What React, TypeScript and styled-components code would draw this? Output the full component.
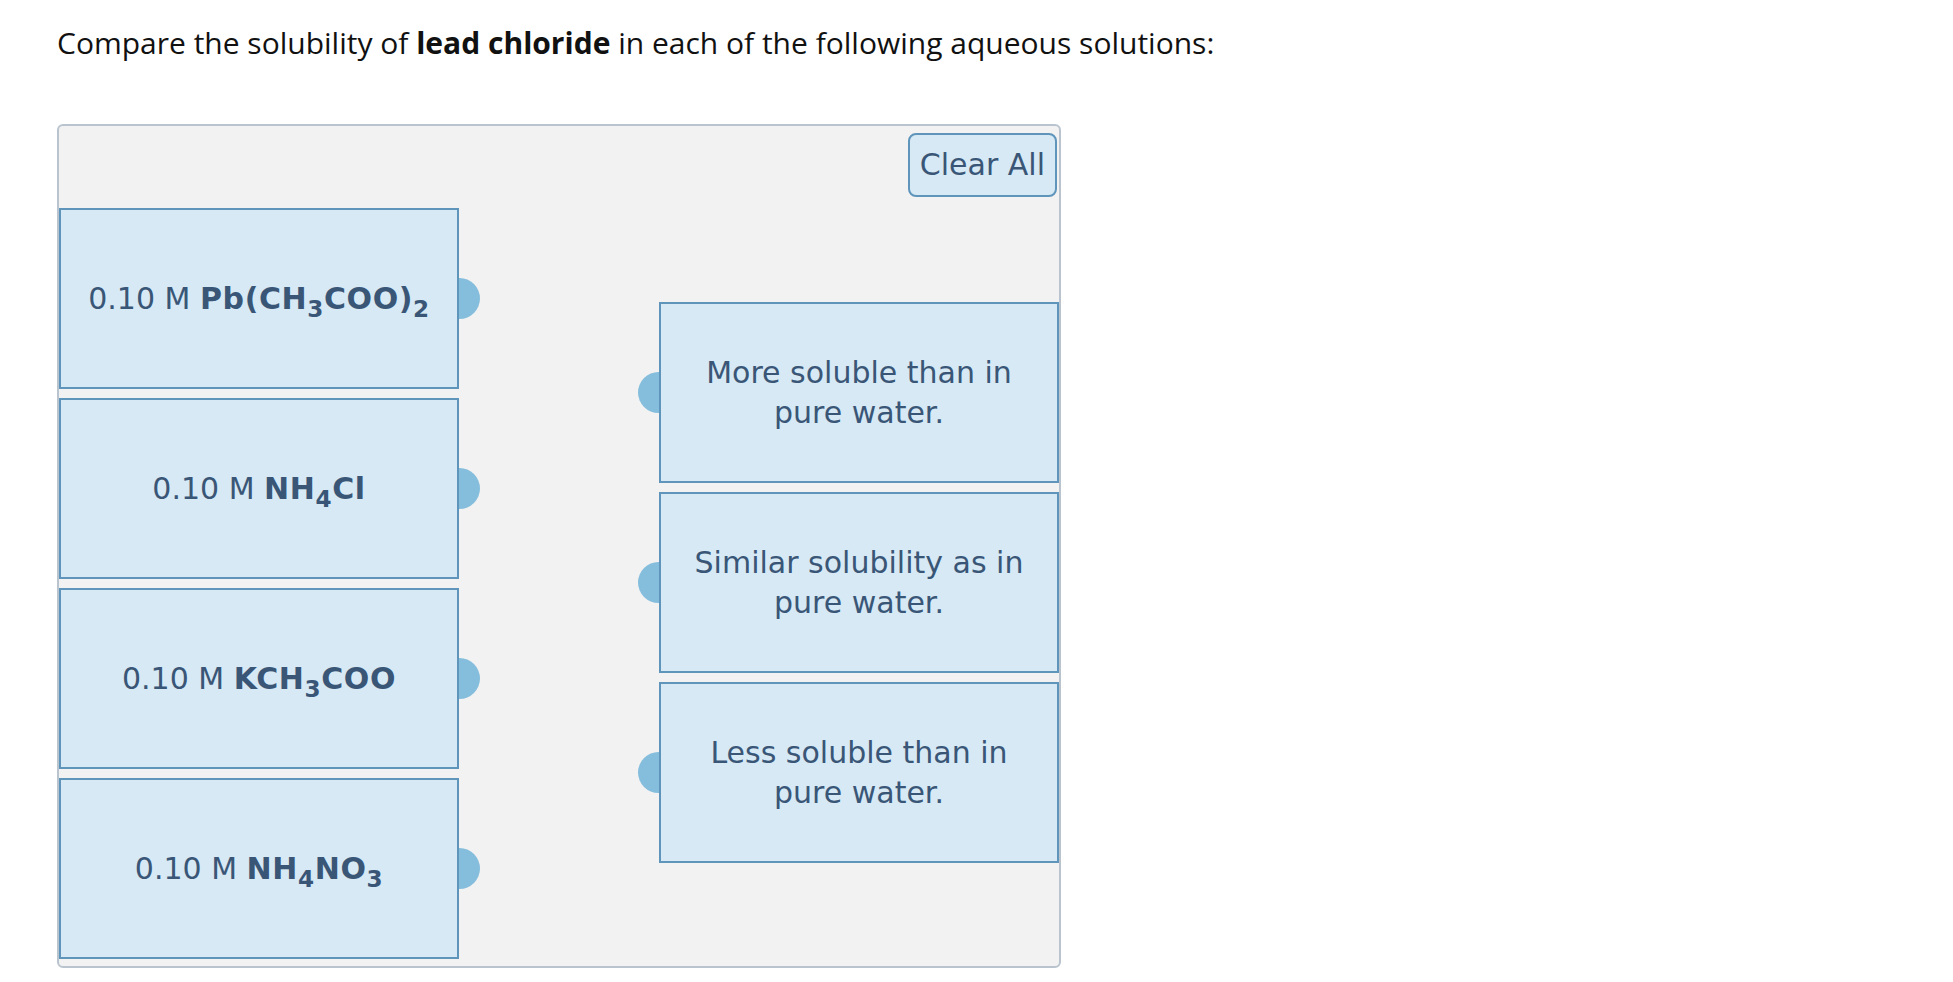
import React from "react";
import styled, { createGlobalStyle } from "styled-components";

const GlobalStyle = createGlobalStyle`
  html, body {
    margin: 0;
    padding: 0;
    background: #ffffff;
  }
  body {
    font-family: "Open Sans", "Liberation Sans", sans-serif;
  }
`;

const Page = styled.div`
  padding: 22px 0 0 57px;
  width: 1004px;
`;

const Question = styled.p`
  margin: 0;
  font-family: "Open Sans", "Liberation Sans", sans-serif;
  font-size: 30px;
  line-height: 41px;
  color: #111111;
  white-space: nowrap;

  strong {
    font-weight: 700;
  }
`;

const Board = styled.div`
  margin-top: 61px;
  box-sizing: border-box;
  width: 1004px;
  border: 2px solid #bac4ce;
  border-radius: 6px;
  background: #f2f2f2;
  padding: 0 0 7px 0;
`;

const Toolbar = styled.div`
  display: flex;
  justify-content: flex-end;
  padding: 7px 2px 0 0;
`;

const ClearButton = styled.button`
  box-sizing: border-box;
  height: 64px;
  padding: 0 10px;
  border: 2px solid #5f95bb;
  border-radius: 8px;
  background: #d6e9f5;
  color: #3a5677;
  font-family: "DejaVu Sans", Verdana, sans-serif;
  font-size: 30px;
  line-height: 1;
  cursor: pointer;
`;

const Columns = styled.div`
  display: flex;
  justify-content: space-between;
  margin-top: 11px;
`;

const Column = styled.div<{ $offset?: number }>`
  display: flex;
  flex-direction: column;
  gap: 9px;
  padding-top: ${(p) => p.$offset ?? 0}px;
`;

const Slot = styled.div`
  position: relative;
  width: 400px;
  height: 181px;
`;

const Pin = styled.span<{ $side: "left" | "right" }>`
  position: absolute;
  top: 50%;
  ${(p) => (p.$side === "right" ? "right: -21px;" : "left: -21px;")}
  width: 41px;
  height: 41px;
  margin-top: -20.5px;
  border-radius: 50%;
  background: #85bedd;
  filter: blur(0.5px);
`;

const Card = styled.div`
  position: relative;
  z-index: 1;
  box-sizing: border-box;
  width: 100%;
  height: 100%;
  display: flex;
  align-items: center;
  justify-content: center;
  text-align: center;
  padding: 0 24px;
  border: 2px solid #5f95bb;
  background: #d6e9f5;
  color: #3a5677;
  font-family: "DejaVu Sans", Verdana, sans-serif;
  font-size: 30px;
  line-height: 40px;

  b {
    font-weight: 700;
    letter-spacing: 0.6px;
  }

  sub {
    font-size: 0.77em;
    line-height: 0;
    vertical-align: -0.36em;
  }
`;

const solutions: React.ReactNode[] = [
  <>
    0.10 M <b>Pb(CH<sub>3</sub>COO)<sub>2</sub></b>
  </>,
  <>
    0.10 M <b>NH<sub>4</sub>Cl</b>
  </>,
  <>
    0.10 M <b>KCH<sub>3</sub>COO</b>
  </>,
  <>
    0.10 M <b>NH<sub>4</sub>NO<sub>3</sub></b>
  </>,
];

const answers = [
  "More soluble than in pure water.",
  "Similar solubility as in pure water.",
  "Less soluble than in pure water.",
];

export default function App() {
  return (
    <>
      <GlobalStyle />
      <Page>
        <Question>
          Compare the solubility of <strong>lead chloride</strong> in each of
          the following aqueous solutions:
        </Question>
        <Board>
          <Toolbar>
            <ClearButton type="button">Clear All</ClearButton>
          </Toolbar>
          <Columns>
            <Column>
              {solutions.map((s, i) => (
                <Slot key={i}>
                  <Pin $side="right" />
                  <Card>
                    <span>{s}</span>
                  </Card>
                </Slot>
              ))}
            </Column>
            <Column $offset={94}>
              {answers.map((a, i) => (
                <Slot key={i}>
                  <Pin $side="left" />
                  <Card>
                    <span>{a}</span>
                  </Card>
                </Slot>
              ))}
            </Column>
          </Columns>
        </Board>
      </Page>
    </>
  );
}
